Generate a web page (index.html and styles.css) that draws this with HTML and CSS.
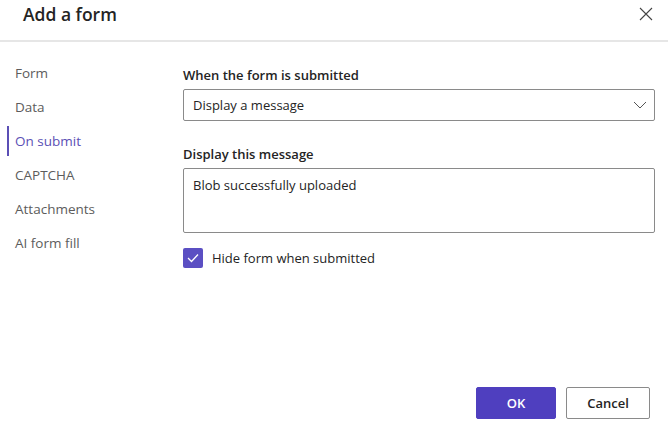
FILE: index.html
```html
<!DOCTYPE html>
<html lang="en">

<head>
    <meta charset="UTF-8">
    <meta name="viewport" content="width=device-width, initial-scale=1.0">
    <title>Add a form</title>
    <link rel="stylesheet" href="styles.css">
</head>

<body>
    <div class="dialog">
        <div class="header">
            <div class="title">Add a form</div>
            <div class="close">
                <svg width="14" height="14" viewBox="0 0 14 14">
                    <path d="M1 1 L13 13 M13 1 L1 13" stroke="#444" stroke-width="1.1" fill="none" />
                </svg>
            </div>
        </div>

        <div class="body">
            <div class="nav">
                <div class="nav-item">Form</div>
                <div class="nav-item">Data</div>
                <div class="nav-item active">On submit</div>
                <div class="nav-item">CAPTCHA</div>
                <div class="nav-item">Attachments</div>
                <div class="nav-item">AI form fill</div>
            </div>

            <div class="content">
                <div class="field">
                    <div class="label">When the form is submitted</div>
                    <div class="select">
                        <span>Display a message</span>
                        <svg width="14" height="8" viewBox="0 0 14 8">
                            <path d="M1 1 L7 7 L13 1" stroke="#555" stroke-width="1" fill="none" />
                        </svg>
                    </div>
                </div>

                <div class="field">
                    <div class="label">Display this message</div>
                    <div class="textarea">Blob successfully uploaded</div>
                </div>

                <div class="check">
                    <div class="box">
                        <svg width="12" height="10" viewBox="0 0 12 10">
                            <path d="M1 5 L4.5 8.5 L11 1.5" stroke="#fff" stroke-width="1.3" fill="none" />
                        </svg>
                    </div>
                    <span>Hide form when submitted</span>
                </div>
            </div>
        </div>

        <div class="footer">
            <div class="btn primary">OK</div>
            <div class="btn">Cancel</div>
        </div>
    </div>
</body>

</html>
```

FILE: styles.css
```css
* {
    margin: 0;
    padding: 0;
    box-sizing: border-box;
}

body {
    font-family: "Open Sans", "Noto Sans", sans-serif;
    font-size: 13px;
    color: #242424;
    background: #fff;
}

.dialog {
    width: 668px;
    height: 431px;
    display: flex;
    flex-direction: column;
}

.header {
    height: 42px;
    display: flex;
    align-items: center;
    justify-content: space-between;
    padding: 0 15px 0 23px;
    border-bottom: 2px solid #e6e6e6;
}

.title {
    font-size: 17.5px;
    font-weight: 600;
    margin-top: -12px;
}

.close {
    display: flex;
    margin-top: -12px;
}

.body {
    flex: 1;
    display: flex;
    padding-top: 14px;
}

.nav {
    width: 183px;
    padding-left: 7px;
}

.nav-item {
    height: 34px;
    line-height: 34px;
    padding-left: 6px;
    color: #5c5c5c;
    border-left: 2px solid transparent;
    font-size: 13.5px;
}

.nav-item.active {
    color: #5b4fb5;
    border-left-color: #5b4fb5;
    line-height: 30px;
    height: 30px;
    margin: 2px 0;
}

.content {
    width: 472px;
    padding-top: 6px;
}

.field {
    margin-bottom: 20px;
}

.label {
    font-weight: 600;
    font-size: 13px;
    height: 27px;
    line-height: 23px;
    padding-top: 2px;
}

.select {
    height: 32px;
    border: 1px solid #8a8a8a;
    border-radius: 2px;
    display: flex;
    align-items: center;
    justify-content: space-between;
    padding: 0 7px 0 9px;
}

.textarea {
    height: 65px;
    border: 1px solid #8a8a8a;
    border-radius: 2px;
    padding: 7px 9px;
}

.check {
    display: flex;
    align-items: center;
    gap: 9px;
    margin-top: -5px;
}

.box {
    width: 20px;
    height: 20px;
    border-radius: 2px;
    background: #5b4fc3;
    display: flex;
    align-items: center;
    justify-content: center;
}

.footer {
    display: flex;
    justify-content: flex-end;
    gap: 10px;
    padding: 0 18px 12px 0;
}

.btn {
    width: 84px;
    height: 32px;
    line-height: 30px;
    text-align: center;
    border: 1px solid #8a8a8a;
    border-radius: 2px;
    font-weight: 600;
}

.primary {
    width: 80px;
    background: #4f3fbf;
    border-color: #4f3fbf;
    color: #fff;
}
```
